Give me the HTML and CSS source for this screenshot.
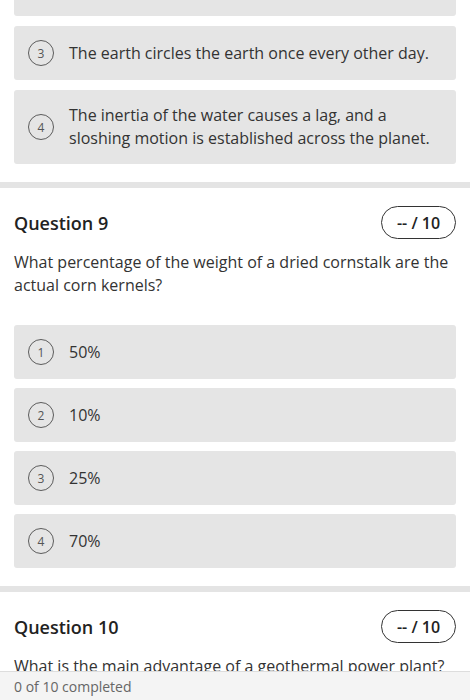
FILE: index.html
```html
<!DOCTYPE html>
<html lang="en">
<head>
    <meta charset="UTF-8">
    <meta name="viewport" content="width=device-width, initial-scale=1.0">
    <title>Quiz</title>
    <link rel="stylesheet" href="styles.css">
</head>
<body>
    <div class="quiz">
        <div class="question">
            <div class="options">
                <div class="option cut"></div>
                <div class="option">
                    <span class="num">3</span>
                    <span class="label">The earth circles the earth once every other day.</span>
                </div>
                <div class="option">
                    <span class="num">4</span>
                    <span class="label">The inertia of the water causes a lag, and a sloshing motion is established across the planet.</span>
                </div>
            </div>
        </div>

        <div class="question">
            <div class="q-head">
                <h2 class="q-title">Question 9</h2>
                <span class="score">-- / 10</span>
            </div>
            <p class="q-text">What percentage of the weight of a dried cornstalk are the actual corn kernels?</p>
            <div class="options">
                <div class="option">
                    <span class="num">1</span>
                    <span class="label">50%</span>
                </div>
                <div class="option">
                    <span class="num">2</span>
                    <span class="label">10%</span>
                </div>
                <div class="option">
                    <span class="num">3</span>
                    <span class="label">25%</span>
                </div>
                <div class="option">
                    <span class="num">4</span>
                    <span class="label">70%</span>
                </div>
            </div>
        </div>

        <div class="question">
            <div class="q-head">
                <h2 class="q-title">Question 10</h2>
                <span class="score">-- / 10</span>
            </div>
            <p class="q-text">What is the main advantage of a geothermal power plant?</p>
        </div>
    </div>

    <div class="progress">0 of 10 completed</div>
</body>
</html>
```

FILE: styles.css
```css
body {
    margin: 0;
    font-family: 'Open Sans', 'Liberation Sans', sans-serif;
    color: #333;
    background: #fff;
}
.quiz {
    padding-bottom: 40px;
}
.question {
    padding: 18px 14px 18px 14px;
    border-top: 6px solid #e4e4e4;
}
.question:first-child {
    padding-top: 0;
    border-top: none;
}
.options {
    display: flex;
    flex-direction: column;
    gap: 9px;
}
.question:first-child .options {
    gap: 10px;
}
.option {
    display: flex;
    align-items: center;
    gap: 15px;
    min-height: 54px;
    box-sizing: border-box;
    padding: 14px 14px;
    background: #e5e5e5;
    border-radius: 3px;
}
.option.cut {
    min-height: 0;
    height: 16px;
    padding: 0;
    border-radius: 0 0 3px 3px;
}
.num {
    flex: none;
    box-sizing: border-box;
    width: 26px;
    height: 26px;
    border: 1.5px solid #5c5c5c;
    border-radius: 50%;
    display: flex;
    align-items: center;
    justify-content: center;
    font-size: 12px;
    color: #555;
}
.label {
    font-size: 16px;
    line-height: 23px;
    color: #333;
}
.q-head {
    display: flex;
    justify-content: space-between;
    align-items: center;
}
.q-title {
    margin: 0;
    font-size: 18px;
    font-weight: 600;
    color: #222;
}
.score {
    width: 73px;
    height: 31px;
    border: 1.5px solid #333;
    border-radius: 17px;
    display: flex;
    align-items: center;
    justify-content: center;
    font-size: 16px;
    font-weight: 600;
    color: #222;
}
.q-text {
    margin: 12px 0 28px 0;
    font-size: 16px;
    line-height: 23px;
    color: #333;
}
.progress {
    position: fixed;
    left: 0;
    right: 0;
    bottom: 0;
    height: 28px;
    padding-left: 14px;
    display: flex;
    align-items: center;
    background: #f4f4f4;
    border-top: 1px solid #ddd;
    font-size: 14px;
    color: #666;
}
```
